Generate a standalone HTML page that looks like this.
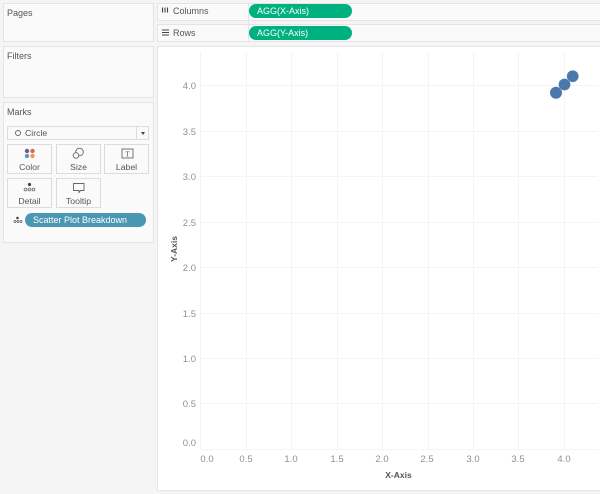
<!DOCTYPE html>
<html><head><meta charset="utf-8"><style>
html,body{margin:0;padding:0;background:#f5f5f5}
body{width:600px;height:494px;position:relative;overflow:hidden;font-family:"Liberation Sans",sans-serif;color:#555;font-size:9px}
#w{position:absolute;left:0;top:0;width:600px;height:494px;filter:blur(.3px)}
.p{position:absolute;box-sizing:border-box;background:#fafafa;border:1px solid #e4e4e4}
.t{position:absolute;white-space:nowrap;line-height:11px}
.b{position:absolute;box-sizing:border-box;background:#fafafa;border:1px solid #dcdcdc}
.l{position:absolute;left:0;right:0;text-align:center;color:#555;font-size:8.7px;line-height:10px}
.pill{position:absolute;left:249px;width:103px;height:14px;border-radius:7px;background:#00b180;color:#fff;font-size:9px;line-height:14px;padding-left:8px;box-sizing:border-box}
</style></head><body><div id="w">
<div class="p" style="left:3px;top:3px;width:151px;height:39px"></div>
<div class="t" style="left:7px;top:8px">Pages</div>
<div class="p" style="left:3px;top:46px;width:151px;height:52px"></div>
<div class="t" style="left:7px;top:51px">Filters</div>
<div class="p" style="left:3px;top:102px;width:151px;height:141px"></div>
<div class="t" style="left:7px;top:107px">Marks</div>

<div class="b" style="left:7px;top:126px;width:142px;height:14px"></div>
<div style="position:absolute;left:136px;top:127px;width:1px;height:12px;background:#ddd"></div>
<div style="position:absolute;left:141px;top:132px;border:2px solid transparent;border-top:3px solid #444;border-bottom:0"></div>
<div style="position:absolute;left:15px;top:130px;width:6px;height:6px;border:1px solid #666;border-radius:50%;box-sizing:border-box"></div>
<div class="t" style="left:25px;top:128px;font-size:8.7px">Circle</div>

<div class="b" style="left:7px;top:144px;width:45px;height:30px"><div class="l" style="top:17px">Color</div></div>
<div class="b" style="left:56px;top:144px;width:45px;height:30px"><div class="l" style="top:17px">Size</div></div>
<div class="b" style="left:104px;top:144px;width:45px;height:30px"><div class="l" style="top:17px">Label</div></div>
<div class="b" style="left:7px;top:178px;width:45px;height:30px"><div class="l" style="top:17px">Detail</div></div>
<div class="b" style="left:56px;top:178px;width:45px;height:30px"><div class="l" style="top:17px">Tooltip</div></div>

<svg style="position:absolute;left:0;top:0" width="160" height="240">
<circle cx="27" cy="151" r="2.2" fill="#7b5b8f"/><circle cx="32.5" cy="151" r="2.2" fill="#d9655b"/>
<circle cx="27" cy="156" r="2.2" fill="#5f97c4"/><circle cx="32.5" cy="156" r="2.2" fill="#eb9a55"/>
<g fill="none" stroke="#666" stroke-width=".9">
<circle cx="79.500" cy="152" r="3.800"/><circle cx="76" cy="155.500" r="2.800" fill="#fafafa"/>
<rect x="122" y="149" width="11" height="9"/></g>
<text x="127.500" y="156.500" font-family="Liberation Serif" font-size="7" fill="#555" text-anchor="middle">T</text>
<circle cx="29.500" cy="184.500" r="1.600" fill="#444"/>
<g fill="none" stroke="#666" stroke-width=".8"><circle cx="25.500" cy="189.500" r="1.400"/><circle cx="29.500" cy="189.500" r="1.400"/><circle cx="33.500" cy="189.500" r="1.400"/>
<path d="M73.500 183.500h10.500v7h-3.500l-1.500 2v-2h-5.500z" stroke-width=".9"/></g>
<circle cx="17.500" cy="218" r="1.300" fill="#444"/>
<g fill="none" stroke="#555" stroke-width=".7"><circle cx="15" cy="221.500" r="1"/><circle cx="18" cy="221.500" r="1"/><circle cx="21" cy="221.500" r="1"/></g>
</svg>
<div style="position:absolute;left:25px;top:213px;width:121px;height:14px;border-radius:7px;background:#4a97b4;color:#fff;font-size:9px;line-height:14px;padding-left:8px;box-sizing:border-box">Scatter Plot Breakdown</div>

<div class="p" style="left:157px;top:3px;width:450px;height:18px"></div>
<div class="p" style="left:157px;top:24px;width:450px;height:18px"></div>
<div style="position:absolute;left:248px;top:3px;width:1px;height:39px;background:#e4e4e4"></div>
<svg style="position:absolute;left:160px;top:5px" width="12" height="36">
<path d="M2.500 2.500v5M5 2.500v5M7.500 2.500v5" stroke="#444" stroke-width="1.100" fill="none"/>
<path d="M2 25h7M2 27.500h7M2 30h7" stroke="#444" stroke-width="1" fill="none"/>
</svg>
<div class="t" style="left:173px;top:6px">Columns</div>
<div class="t" style="left:173px;top:28px">Rows</div>
<div class="pill" style="top:4px">AGG(X-Axis)</div>
<div class="pill" style="top:26px">AGG(Y-Axis)</div>

<div style="position:absolute;left:157px;top:46px;width:450px;height:445px;background:#fff;border:1px solid #e6e6e6;box-sizing:border-box"></div>
<svg style="position:absolute;left:0;top:0" width="600" height="494" font-family="Liberation Sans" font-size="9.500">
<g stroke="#f4f4f4" stroke-width="1" fill="none">
<path d="M200.500 52V450M246.500 52V450M291.500 52V450M337.500 52V450M382.500 52V450M428.500 52V450M473.500 52V450M518.500 52V450M564.500 52V450"/>
<path d="M200 85.500H598M200 131.500H598M200 176.500H598M200 222.500H598M200 267.500H598M200 313.500H598M200 358.500H598M200 403.500H598M200 449.500H598"/>
</g>
<g fill="#909090" text-anchor="end">
<text x="196" y="89">4.0</text><text x="196" y="135">3.5</text><text x="196" y="180">3.0</text><text x="196" y="226">2.5</text><text x="196" y="271">2.0</text><text x="196" y="317">1.5</text><text x="196" y="362">1.0</text><text x="196" y="407">0.5</text><text x="196" y="446">0.0</text>
</g>
<g fill="#909090" text-anchor="middle">
<text x="207" y="462">0.0</text><text x="246" y="462">0.5</text><text x="291" y="462">1.0</text><text x="337" y="462">1.5</text><text x="382" y="462">2.0</text><text x="427" y="462">2.5</text><text x="473" y="462">3.0</text><text x="518" y="462">3.5</text><text x="564" y="462">4.0</text>
</g>
<text x="398.500" y="478" font-size="8.500" font-weight="700" fill="#555" text-anchor="middle">X-Axis</text>
<text transform="translate(177,249) rotate(-90)" font-size="8.500" font-weight="700" fill="#555" text-anchor="middle">Y-Axis</text>
<circle cx="556" cy="92.700" r="6" fill="#4a78aa"/>
<circle cx="564.500" cy="84.500" r="6" fill="#4a78aa" stroke="#fff" stroke-opacity=".5" stroke-width=".5"/>
<circle cx="572.700" cy="76.200" r="6" fill="#4a78aa" stroke="#fff" stroke-opacity=".5" stroke-width=".5"/>
</svg>
</div></body></html>
